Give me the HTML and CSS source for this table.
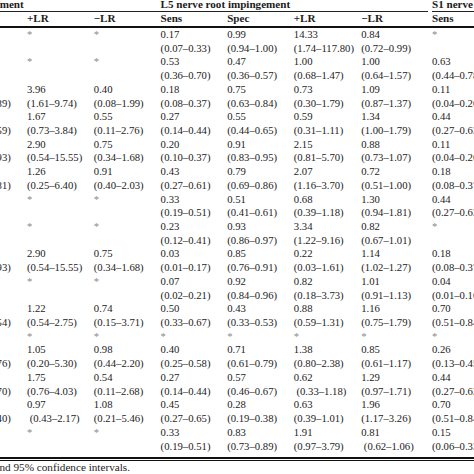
FILE: index.html
```html
<!DOCTYPE html>
<html lang="en">
<head>
<meta charset="utf-8">
<title>Diagnostic accuracy</title>
<link rel="stylesheet" href="styles.css">
</head>
<body>
<table class="results">
  <colgroup>
    <col class="w-a"><col class="w-f"><col class="w-a"><col class="w-a">
    <col class="w-b"><col class="w-b"><col class="w-c"><col class="w-d"><col class="w-e">
  </colgroup>
  <thead>
    <tr class="groups">
      <th colspan="4" class="grp">L4 nerve root impingement</th>
      <th colspan="4" class="grp grp-l5">L5 nerve root impingement</th>
      <th class="grp">S1 nerve root impingement</th>
    </tr>
    <tr class="heads">
      <th>Sens</th><th>Spec</th><th>+LR</th><th>&minus;LR</th>
      <th>Sens</th><th>Spec</th><th>+LR</th><th>&minus;LR</th>
      <th>Sens</th>
    </tr>
  </thead>
  <tbody>
    <tr>
      <td class="na">*</td><td class="na">*</td><td class="na">*</td><td class="na">*</td>
      <td>0.17<br>(0.07–0.33)</td><td>0.99<br>(0.94–1.00)</td><td>14.33<br>(1.74–117.80)</td><td>0.84<br>(0.72–0.99)</td><td class="na">*</td>
    </tr>
    <tr>
      <td class="na">*</td><td class="na">*</td><td class="na">*</td><td class="na">*</td>
      <td>0.53<br>(0.36–0.70)</td><td>0.47<br>(0.36–0.57)</td><td>1.00<br>(0.68–1.47)</td><td>1.00<br>(0.64–1.57)</td><td>0.63<br>(0.44–0.78)</td>
    </tr>
    <tr>
      <td>0.18<br>(0.08–0.37)</td><td>0.96<br>(0.91–0.89)</td>
      <td>3.96<br>(1.61–9.74)</td><td>0.40<br>(0.08–1.99)</td>
      <td>0.18<br>(0.08–0.37)</td><td>0.75<br>(0.63–0.84)</td><td>0.73<br>(0.30–1.79)</td><td>1.09<br>(0.87–1.37)</td><td>0.11<br>(0.04–0.26)</td>
    </tr>
    <tr>
      <td>0.27<br>(0.14–0.44)</td><td>0.84<br>(0.77–0.59)</td>
      <td>1.67<br>(0.73–3.84)</td><td>0.55<br>(0.11–2.76)</td>
      <td>0.27<br>(0.14–0.44)</td><td>0.55<br>(0.44–0.65)</td><td>0.59<br>(0.31–1.11)</td><td>1.34<br>(1.00–1.79)</td><td>0.44<br>(0.27–0.63)</td>
    </tr>
    <tr>
      <td>0.20<br>(0.10–0.37)</td><td>0.93<br>(0.88–0.93)</td>
      <td>2.90<br>(0.54–15.55)</td><td>0.75<br>(0.34–1.68)</td>
      <td>0.20<br>(0.10–0.37)</td><td>0.91<br>(0.83–0.95)</td><td>2.15<br>(0.81–5.70)</td><td>0.88<br>(0.73–1.07)</td><td>0.11<br>(0.04–0.26)</td>
    </tr>
    <tr>
      <td>0.43<br>(0.27–0.61)</td><td>0.66<br>(0.49–0.81)</td>
      <td>1.26<br>(0.25–6.40)</td><td>0.91<br>(0.40–2.03)</td>
      <td>0.43<br>(0.27–0.61)</td><td>0.79<br>(0.69–0.86)</td><td>2.07<br>(1.16–3.70)</td><td>0.72<br>(0.51–1.00)</td><td>0.18<br>(0.08–0.37)</td>
    </tr>
    <tr>
      <td class="na">*</td><td class="na">*</td><td class="na">*</td><td class="na">*</td>
      <td>0.33<br>(0.19–0.51)</td><td>0.51<br>(0.41–0.61)</td><td>0.68<br>(0.39–1.18)</td><td>1.30<br>(0.94–1.81)</td><td>0.44<br>(0.27–0.63)</td>
    </tr>
    <tr>
      <td class="na">*</td><td class="na">*</td><td class="na">*</td><td class="na">*</td>
      <td>0.23<br>(0.12–0.41)</td><td>0.93<br>(0.86–0.97)</td><td>3.34<br>(1.22–9.16)</td><td>0.82<br>(0.67–1.01)</td><td class="na">*</td>
    </tr>
    <tr>
      <td>0.20<br>(0.10–0.37)</td><td>0.93<br>(0.88–0.93)</td>
      <td>2.90<br>(0.54–15.55)</td><td>0.75<br>(0.34–1.68)</td>
      <td>0.03<br>(0.01–0.17)</td><td>0.85<br>(0.76–0.91)</td><td>0.22<br>(0.03–1.61)</td><td>1.14<br>(1.02–1.27)</td><td>0.18<br>(0.08–0.37)</td>
    </tr>
    <tr>
      <td class="na">*</td><td class="na">*</td><td class="na">*</td><td class="na">*</td>
      <td>0.07<br>(0.02–0.21)</td><td>0.92<br>(0.84–0.96)</td><td>0.82<br>(0.18–3.73)</td><td>1.01<br>(0.91–1.13)</td><td>0.04<br>(0.01–0.16)</td>
    </tr>
    <tr>
      <td>0.50<br>(0.33–0.67)</td><td>0.59<br>(0.46–0.54)</td>
      <td>1.22<br>(0.54–2.75)</td><td>0.74<br>(0.15–3.71)</td>
      <td>0.50<br>(0.33–0.67)</td><td>0.43<br>(0.33–0.53)</td><td>0.88<br>(0.59–1.31)</td><td>1.16<br>(0.75–1.79)</td><td>0.70<br>(0.51–0.84)</td>
    </tr>
    <tr>
      <td class="na">*</td><td class="na">*</td><td class="na">*</td><td class="na">*</td>
      <td class="na">*</td><td class="na">*</td><td class="na">*</td><td class="na">*</td><td class="na">*</td>
    </tr>
    <tr>
      <td>0.40<br>(0.25–0.58)</td><td>0.62<br>(0.47–0.76)</td>
      <td>1.05<br>(0.20–5.30)</td><td>0.98<br>(0.44–2.20)</td>
      <td>0.40<br>(0.25–0.58)</td><td>0.71<br>(0.61–0.79)</td><td>1.38<br>(0.80–2.38)</td><td>0.85<br>(0.61–1.17)</td><td>0.26<br>(0.13–0.45)</td>
    </tr>
    <tr>
      <td>0.27<br>(0.14–0.44)</td><td>0.84<br>(0.77–0.70)</td>
      <td>1.75<br>(0.76–4.03)</td><td>0.54<br>(0.11–2.68)</td>
      <td>0.27<br>(0.14–0.44)</td><td>0.57<br>(0.46–0.67)</td><td>0.62<br>&nbsp;(0.33–1.18)</td><td>1.29<br>(0.97–1.71)</td><td>0.44<br>(0.27–0.63)</td>
    </tr>
    <tr>
      <td>0.45<br>(0.27–0.65)</td><td>0.54<br>(0.38–0.40)</td>
      <td>0.97<br>&nbsp;(0.43–2.17)</td><td>1.08<br>(0.21–5.46)</td>
      <td>0.45<br>(0.27–0.65)</td><td>0.28<br>(0.19–0.38)</td><td>0.63<br>(0.39–1.01)</td><td>1.96<br>(1.17–3.26)</td><td>0.70<br>(0.51–0.84)</td>
    </tr>
    <tr class="last">
      <td class="na">*</td><td class="na">*</td><td class="na">*</td><td class="na">*</td>
      <td>0.33<br>(0.19–0.51)</td><td>0.83<br>(0.73–0.89)</td><td>1.91<br>(0.97–3.79)</td><td>0.81<br>&nbsp;(0.62–1.06)</td><td>0.15<br>(0.06–0.33)</td>
    </tr>
  </tbody>
</table>
<div class="note"><span>Values are sensitivity, specificity, likelihood ratios and 95% confidence intervals.</span></div>
</body>
</html>
```

FILE: styles.css
```css
html, body {
  margin: 0;
  padding: 0;
  background: #ffffff;
  overflow: hidden;
}

body {
  width: 474px;
  height: 474px;
  font-family: "Liberation Serif", "Times New Roman", serif;
  font-size: 10.7px;
  line-height: 13.72px;
  color: #1c1c1c;
}

.results {
  border-collapse: separate;
  border-spacing: 0;
  table-layout: fixed;
  width: 617.8px;
  margin: -2.5px 0 0 -105.8px;
  padding: 0 0 1px;
  border-bottom: 1px solid #111;
}

.w-a { width: 66.8px; }
.w-f { width: 66px; }
.w-b { width: 66.6px; }
.w-c { width: 67.4px; }
.w-d { width: 70.8px; }
.w-e { width: 80px; }

.results th,
.results td {
  padding: 0;
  text-align: left;
  vertical-align: top;
  white-space: nowrap;
  overflow: visible;
}

.results th {
  font-weight: bold;
  font-size: 11.1px;
}

.groups .grp {
  padding-bottom: 1px;
  background: linear-gradient(#222, #222) left bottom / 100% 1px no-repeat;
}

.groups .grp-l5 {
  background-size: calc(100% - 4px) 1px;
}

.heads th {
  border-bottom: 2px solid #111;
}

.results .na {
  color: #8a8a8a;
}

.results .last td {
  padding-bottom: 3.7px;
  border-bottom: 2px solid #111;
}

.note {
  width: 130px;
  display: flex;
  justify-content: flex-end;
  white-space: nowrap;
  font-size: 11.2px;
  line-height: 13.72px;
}
```
